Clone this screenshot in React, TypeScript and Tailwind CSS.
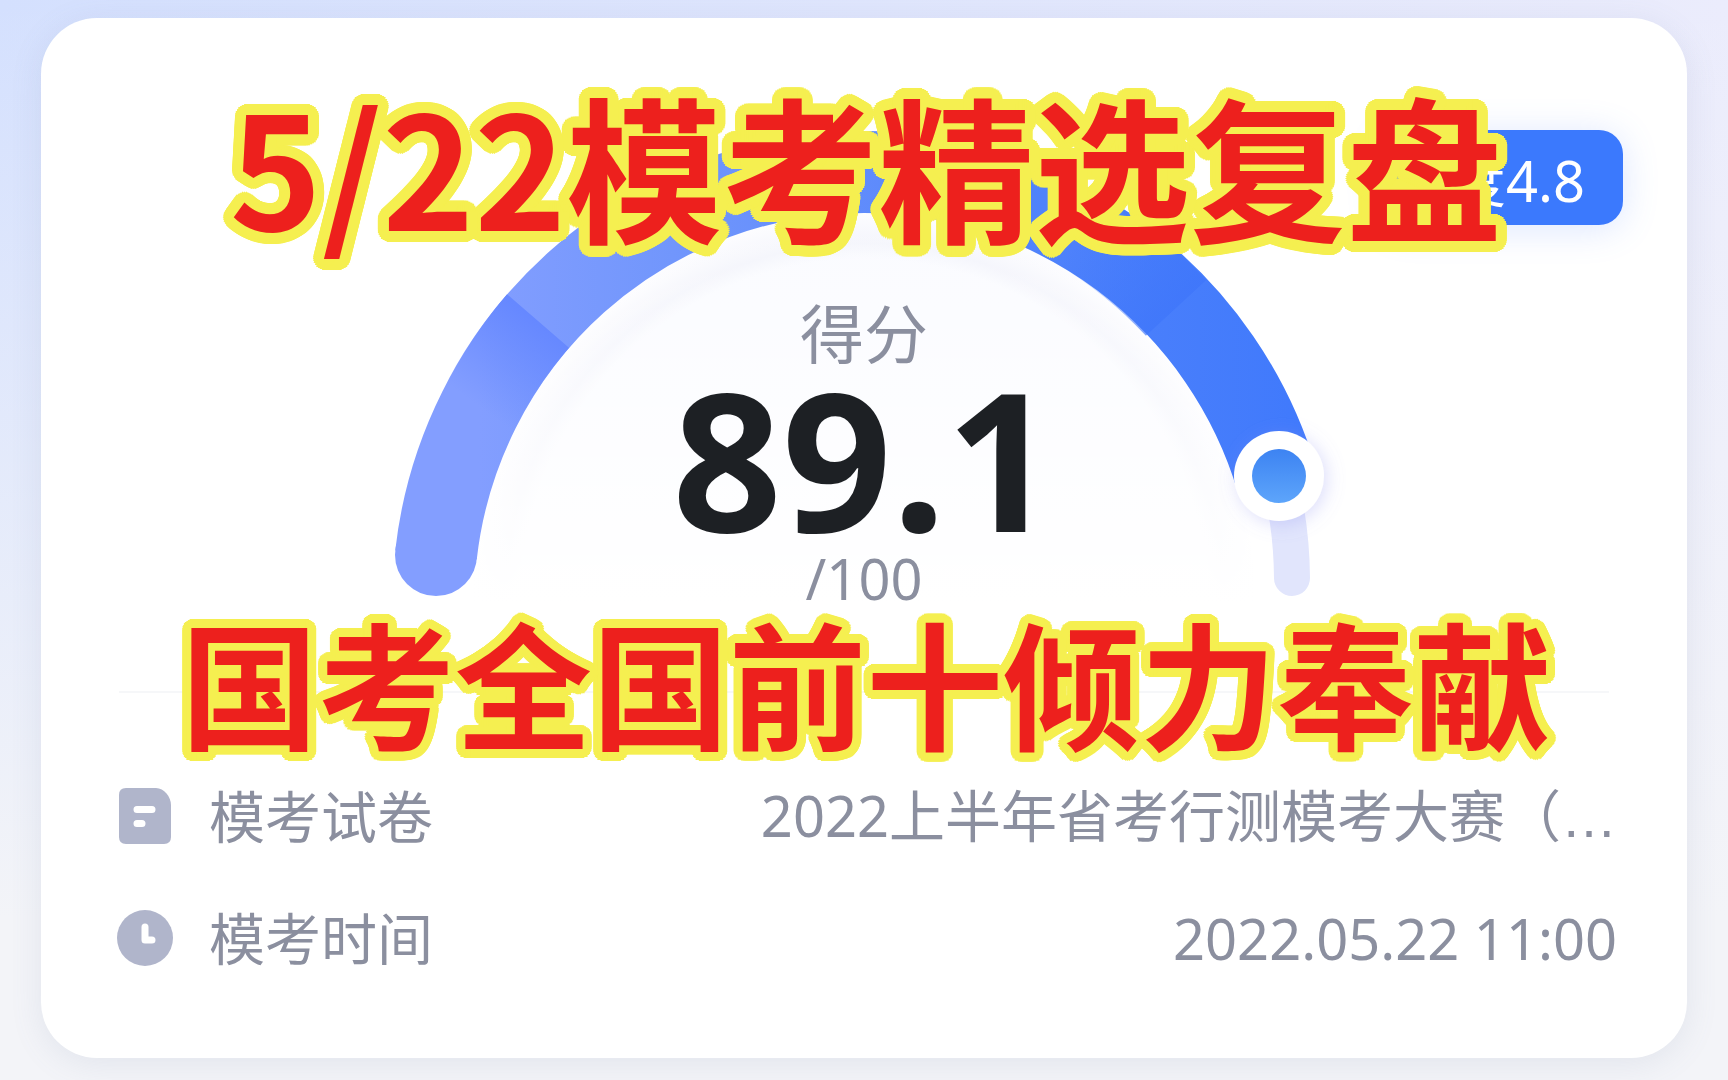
import type { ReactNode } from "react";

const headline = "absolute inset-x-0 pl-1 text-center font-['Noto_Sans_CJK_SC',sans-serif] font-bold leading-none whitespace-nowrap text-[#ed201d]";

// rounded outline: solid shadows placed on a circle around the glyphs
function outline(radius: number) {
    return Array.from({ length: 32 }, (_, i) => {
        const a = (i / 32) * Math.PI * 2;
        return `${(Math.cos(a) * radius).toFixed(1)}px ${(Math.sin(a) * radius).toFixed(1)}px 0 #f5ef50`;
    }).concat(`0 0 ${radius}px #f5ef50`).join(", ");
}

function PaperIcon() {
    return (
        <svg viewBox="0 0 56 56" className="size-14 shrink-0" aria-hidden="true">
            <path d="M9 0H39C47 0 54 9 54 17V49Q54 56 47 56H9Q2 56 2 49V7Q2 0 9 0Z" fill="#b0b5cb" />
            <path d="M20 21.500H35M20 35.500H25" stroke="#fff" strokeWidth="7" strokeLinecap="round" />
        </svg>
    )
}

function ClockIcon() {
    return (
        <svg viewBox="0 0 56 56" className="size-14 shrink-0" aria-hidden="true">
            <circle cx="28" cy="28" r="28" fill="#b0b5cb" />
            <path d="M28 17V30H35" fill="none" stroke="#fff" strokeWidth="7" strokeLinecap="round" strokeLinejoin="round" />
        </svg>
    )
}

function Gauge() {
    return (
        <svg viewBox="363 18 1000 674" className="h-[674px] w-[1000px]" aria-hidden="true">
            <defs>
                <linearGradient id="band" gradientUnits="userSpaceOnUse" x1="394" y1="0" x2="1320" y2="0">
                    <stop offset="0" stopColor="#839eff" />
                    <stop offset="0.09" stopColor="#839eff" />
                    <stop offset="0.3" stopColor="#7196fc" />
                    <stop offset="0.7" stopColor="#4f82fb" />
                    <stop offset="1" stopColor="#3f79fc" />
                </linearGradient>
                <linearGradient id="fold" gradientUnits="userSpaceOnUse" x1="537" y1="321" x2="476" y2="405">
                    <stop offset="0" stopColor="#6688ff" />
                    <stop offset="1" stopColor="#6688ff" stopOpacity="0" />
                </linearGradient>
                <linearGradient id="foldRight" gradientUnits="userSpaceOnUse" x1="1175" y1="308" x2="1085" y2="232">
                    <stop offset="0" stopColor="#3e75fa" stopOpacity="0.7" />
                    <stop offset="1" stopColor="#3e75fa" stopOpacity="0" />
                </linearGradient>
                <radialGradient id="dial" gradientUnits="userSpaceOnUse" cx="863" cy="603" r="391">
                    <stop offset="0.88" stopColor="#fafbff" />
                    <stop offset="0.92" stopColor="#f4f5fc" />
                    <stop offset="1" stopColor="#fdfdff" />
                </radialGradient>
                <linearGradient id="fade" x1="0" y1="0" x2="0" y2="1">
                    <stop offset="0" stopColor="#fff" stopOpacity="0" />
                    <stop offset="1" stopColor="#fff" />
                </linearGradient>
                <linearGradient id="dot" x1="0" y1="0" x2="0" y2="1">
                    <stop offset="0" stopColor="#3d83f2" />
                    <stop offset="1" stopColor="#5da5fb" />
                </linearGradient>
                <filter id="glow" x="-50%" y="-50%" width="200%" height="200%">
                    <feDropShadow dx="3" dy="3" stdDeviation="9" floodColor="#8b8df0" floodOpacity="0.3" />
                </filter>
            </defs>

            {/* dial face */}
            <path d="M472 603A391 391 0 0 1 1254 603Z" fill="url(#dial)" />
            <rect x="470" y="211" width="790" height="393" fill="url(#fade)" />

            {/* remaining track */}
            <path d="M1278 476A431 431 0 0 1 1291 578" fill="none" stroke="#e1e5fc" strokeWidth="36" strokeLinecap="round" />

            {/* score band */}
            <circle cx="435" cy="555" r="41" fill="#839eff" />
            <path d="M435 555A431 431 0 0 1 863 172A431 431 0 0 1 1276 480" fill="none" stroke="url(#band)" strokeWidth="82" />
            <path d="M537 321A431 431 0 0 0 468 430" fill="none" stroke="url(#fold)" strokeWidth="82" />
            <path d="M1075 228A431 431 0 0 1 1175 308" fill="none" stroke="url(#foldRight)" strokeWidth="82" />

            <circle cx="1278" cy="476" r="45" fill="#fff" filter="url(#glow)" />
            <circle cx="1278" cy="476" r="27" fill="url(#dot)" />
        </svg>
    )
}

function InfoRow({ icon, label, children }: { icon: ReactNode; label: string; children: ReactNode }) {
    return (
        <div className="flex h-16 items-center">
            {icon}
            <dt className="ml-9 shrink-0">{label}</dt>
            <dd className="ml-auto whitespace-nowrap">{children}</dd>
        </div>
    )
}

export default function App() {
    return (
        <main
            lang="zh-CN"
            className="flex min-h-screen flex-col overflow-hidden bg-[linear-gradient(to_bottom,transparent,#f3f4f8_85%),linear-gradient(to_right,#d4e0fe,#ebecfc)] px-[41px] pt-[18px] pb-[22px] font-['Noto_Sans','Noto_Sans_CJK_SC',sans-serif] text-[#8b8f9f]"
        >
            <section className="relative flex-1 rounded-[56px] bg-white shadow-[0_6px_32px_rgba(110,120,160,0.12)]">
                <div className="relative mx-[78px] flex h-[675px] justify-center border-b-2 border-[#f6f7f9]">
                    <Gauge />
                    <div className="absolute inset-x-0 top-[284px] flex flex-col items-center">
                        <p className="text-[64px] leading-[64px]">得分</p>
                        <p className="text-[192px] leading-[184px] font-bold text-[#1d2024]">89.1</p>
                        <p className="text-[56px] leading-[56px]">/100</p>
                    </div>
                </div>

                <div className="absolute top-28 right-16 flex h-[95px] items-center rounded-3xl bg-[#3b79fd] pt-1 pr-[38px] pl-3 text-[56px] text-white shadow-[0_4px_36px_rgba(80,130,255,0.2)]">
                    难度4.8
                </div>

                <dl className="flex flex-col gap-[58px] pt-[91px] pr-[70px] pb-[88px] pl-[76px] text-[56px] leading-[64px]">
                    <InfoRow icon={<PaperIcon />} label="模考试卷">
                        2022上半年省考行测模考大赛（<span className="font-['Liberation_Sans',sans-serif]">…</span>
                    </InfoRow>
                    <InfoRow icon={<ClockIcon />} label="模考时间">
                        2022.05.22 11:00
                    </InfoRow>
                </dl>

                <h1 className={`top-[67px] text-[156px] ${headline}`} style={{ textShadow: outline(11) }}>
                    5/22模考精选复盘
                </h1>
                <h2 className={`top-[594px] text-[137px] ${headline}`} style={{ textShadow: outline(9) }}>
                    国考全国前十倾力奉献
                </h2>
            </section>
        </main>
    )
}
